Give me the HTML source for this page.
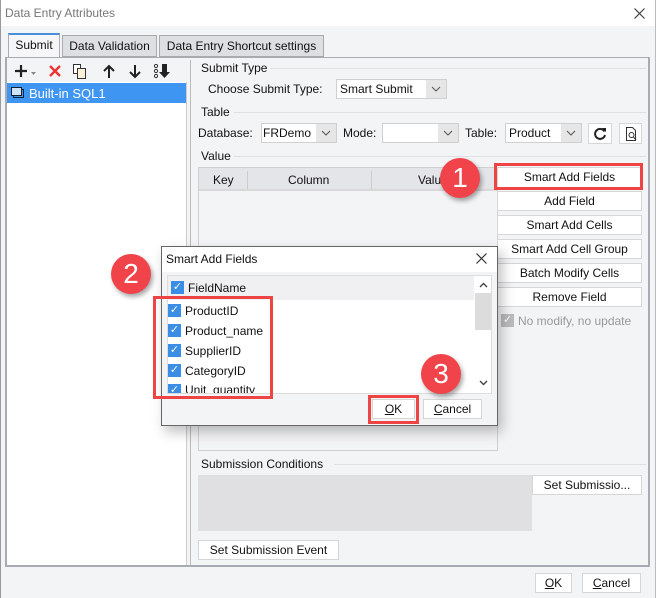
<!DOCTYPE html>
<html><head><style>
*{box-sizing:border-box;margin:0;padding:0}
body{width:656px;height:598px;background:#f3f4f6;font-family:"Liberation Sans",sans-serif;font-size:12px;color:#111;position:relative;overflow:hidden}
.a{position:absolute}
.btn{position:absolute;background:#fff;border:1px solid #d6d6d6;text-align:center;line-height:18px;font-size:12px}
.sel{position:absolute;background:#fff;border:1px solid #d0d0d0;height:20px;line-height:18px;padding-left:3px}
.sel .ar{position:absolute;right:0;top:0;width:20px;height:18px;background:#e6e6e6}
.sel .ar svg{position:absolute;left:5px;top:6px}
.lbl{position:absolute;font-size:12px}
.grp{position:absolute;height:1px;background:#e0e0e0}
.circ{position:absolute;width:40px;height:40px;border-radius:50%;background:#f0434a;color:#fff;font-size:28px;text-align:center;line-height:40px;box-shadow:2px 3px 5px rgba(0,0,0,.35)}
.red{position:absolute;border:3px solid #ee4444}
.cb{position:absolute;width:13px;height:13px;background:#3a8ee6;color:#fff;font-size:11px;line-height:13px;text-align:center}
.row{position:absolute;left:185px;font-size:12px}
</style></head><body>
<div class="a" style="left:0;top:0;width:656px;height:26px;background:#fff"></div>
<div class="lbl" style="left:5px;top:6px;color:#777">Data Entry Attributes</div>
<svg class="a" style="left:634px;top:8px" width="11" height="11"><path d="M0.5 0.5L10.5 10.5M10.5 0.5L0.5 10.5" stroke="#444" stroke-width="1.2"/></svg>
<div class="a" style="left:0;top:0;width:1px;height:598px;background:#999"></div>
<div class="a" style="left:655px;top:0;width:1px;height:598px;background:#bbb"></div>
<!-- tabs -->
<div class="a" style="left:8px;top:33px;width:52px;height:25px;background:#f6f6f8;border:1px solid #aab;border-top:2px solid #4a8fdc;border-bottom:none;text-align:center;line-height:20px">Submit</div>
<div class="a" style="left:62px;top:35px;width:95px;height:22px;background:#dedfe3;border:1px solid #aaa;text-align:center;line-height:20px">Data Validation</div>
<div class="a" style="left:159px;top:35px;width:165px;height:22px;background:#dedfe3;border:1px solid #aaa;text-align:center;line-height:20px">Data Entry Shortcut settings</div>
<div class="a" style="left:5px;top:57px;width:645px;height:510px;border:2px solid #a8abb3;border-top:1px solid #a8abb3"></div>
<!-- left -->
<div class="a" style="left:7px;top:82px;width:180px;height:483px;background:#fff;border-right:1px solid #ccc"></div>
<div class="a" style="left:7px;top:83px;width:179px;height:20px;background:#3e96f2"></div>
<div class="a" style="left:13px;top:89px;width:11px;height:9px;border:1px solid #123;background:#3e96f2"></div>
<div class="a" style="left:11px;top:87px;width:11px;height:9px;border:1px solid #123;background:#cfe3fa"></div>
<div class="lbl" style="left:29px;top:86px;color:#fff;font-size:13px">Built-in SQL1</div>
<svg class="a" style="left:14px;top:64px" width="200" height="16">
<path d="M1 7H13M7 1V13" stroke="#222" stroke-width="2.2"/>
<path d="M17 8h5l-2.5 3z" fill="#888"/>
<path d="M36 2L46 12M46 2L36 12" stroke="#e33" stroke-width="2.4"/>
<rect x="59.5" y="0.5" width="7" height="9" fill="#fff" stroke="#333"/>
<rect x="63.5" y="4.5" width="8" height="10" fill="#fdf2d8" stroke="#333"/>
<path d="M95 14V3M90 7l5-5 5 5" stroke="#222" stroke-width="2" fill="none"/>
<path d="M121 1V12M116 8l5 5 5-5" stroke="#222" stroke-width="2" fill="none"/>
<circle cx="142" cy="2" r="1.6" fill="none" stroke="#333"/><circle cx="142" cy="7" r="1.6" fill="none" stroke="#333"/><circle cx="142" cy="12" r="1.6" fill="none" stroke="#333"/>
<path d="M148 0h5v8h3l-5.5 6-5.5-6h3z" fill="#222"/>
</svg>
<div class="a" style="left:190px;top:60px;width:1px;height:505px;background:#bbb"></div>
<!-- right -->
<div class="lbl" style="left:201px;top:61px">Submit Type</div><div class="grp" style="left:270px;top:68px;width:376px"></div>
<div class="lbl" style="left:208px;top:82px">Choose Submit Type:</div>
<div class="sel" style="left:336px;top:79px;width:111px">Smart Submit<span class="ar"><svg width="10" height="6"><path d="M1 1l4 4 4-4" stroke="#555" fill="none"/></svg></span></div>
<div class="lbl" style="left:201px;top:105px">Table</div><div class="grp" style="left:234px;top:112px;width:412px"></div>
<div class="lbl" style="left:198px;top:126px">Database:</div>
<div class="sel" style="left:261px;top:123px;width:76px;padding-left:1px">FRDemo<span class="ar"><svg width="10" height="6"><path d="M1 1l4 4 4-4" stroke="#555" fill="none"/></svg></span></div>
<div class="lbl" style="left:343px;top:126px">Mode:</div>
<div class="sel" style="left:382px;top:123px;width:77px"><span class="ar"><svg width="10" height="6"><path d="M1 1l4 4 4-4" stroke="#555" fill="none"/></svg></span></div>
<div class="lbl" style="left:465px;top:126px">Table:</div>
<div class="sel" style="left:505px;top:123px;width:77px">Product<span class="ar"><svg width="10" height="6"><path d="M1 1l4 4 4-4" stroke="#555" fill="none"/></svg></span></div>
<div class="btn" style="left:588px;top:123px;width:24px;height:21px"><svg style="margin-top:3px" width="14" height="14"><path d="M11.5 4.5A5 5 0 1 0 12 8" stroke="#222" stroke-width="2" fill="none"/><path d="M9 1h4v4z" fill="#222"/></svg></div>
<div class="btn" style="left:619px;top:123px;width:23px;height:21px"><svg style="margin-top:3px" width="14" height="14"><path d="M2.5 .5h6l3 3v10h-9z" fill="#fff" stroke="#333"/><circle cx="7.5" cy="8" r="2.5" fill="none" stroke="#333"/><path d="M9.5 10l2.5 3" stroke="#333"/></svg></div>
<div class="lbl" style="left:201px;top:149px">Value</div><div class="grp" style="left:234px;top:156px;width:412px"></div>
<div class="a" style="left:198px;top:167px;width:300px;height:284px;border:1px solid #d0d0d0;background:#f3f4f6"></div>
<div class="a" style="left:199px;top:168px;width:298px;height:23px;background:#e4e5e9;border-bottom:2px solid #d8d8d8"></div>
<div class="lbl" style="left:213px;top:173px">Key</div><div class="a" style="left:247px;top:171px;width:1px;height:18px;background:#ccc"></div>
<div class="lbl" style="left:288px;top:173px">Column</div><div class="a" style="left:371px;top:171px;width:1px;height:18px;background:#ccc"></div>
<div class="lbl" style="left:418px;top:173px">Value</div>
<div class="btn" style="left:497px;top:167px;width:145px;height:21px">Smart Add Fields</div>
<div class="red" style="left:494px;top:163px;width:149px;height:27px"></div>
<div class="btn" style="left:497px;top:191px;width:145px;height:20px">Add Field</div>
<div class="btn" style="left:497px;top:215px;width:145px;height:20px">Smart Add Cells</div>
<div class="btn" style="left:497px;top:239px;width:145px;height:20px">Smart Add Cell Group</div>
<div class="btn" style="left:497px;top:263px;width:145px;height:20px">Batch Modify Cells</div>
<div class="btn" style="left:497px;top:287px;width:145px;height:20px">Remove Field</div>
<div class="cb" style="left:501px;top:314px;background:#bbb">✓</div>
<div class="lbl" style="left:518px;top:314px;color:#999">No modify, no update</div>
<div class="circ" style="left:440px;top:158px">1</div>
<div class="lbl" style="left:201px;top:457px">Submission Conditions</div><div class="grp" style="left:334px;top:464px;width:312px"></div>
<div class="a" style="left:198px;top:475px;width:334px;height:56px;background:#e0e0e2"></div>
<div class="btn" style="left:532px;top:475px;width:110px;height:20px">Set Submissio...</div>
<div class="btn" style="left:198px;top:540px;width:141px;height:20px">Set Submission Event</div>
<div class="btn" style="left:535px;top:573px;width:37px;height:20px"><u>O</u>K</div>
<div class="btn" style="left:582px;top:573px;width:59px;height:20px"><u>C</u>ancel</div>
<!-- dialog -->
<div class="a" style="left:161px;top:246px;width:337px;height:180px;background:#f3f4f6;border:1px solid #666;box-shadow:4px 6px 12px rgba(0,0,0,.25)"></div>
<div class="a" style="left:162px;top:247px;width:335px;height:25px;background:#fff"></div>
<div class="lbl" style="left:166px;top:252px">Smart Add Fields</div>
<svg class="a" style="left:476px;top:253px" width="11" height="11"><path d="M0.5 0.5L10.5 10.5M10.5 0.5L0.5 10.5" stroke="#333" stroke-width="1.2"/></svg>
<div class="a" style="left:167px;top:275px;width:325px;height:119px;background:#fff;border:1px solid #ddd"></div>
<div class="a" style="left:168px;top:276px;width:306px;height:24px;background:#f0f0f2"></div>
<div class="a" style="left:475px;top:293px;width:16px;height:37px;background:#dcdcdc"></div>
<svg class="a" style="left:479px;top:282px" width="9" height="6"><path d="M1 5l3.5-3.5L8 5" stroke="#444" fill="none" stroke-width="1.4"/></svg>
<svg class="a" style="left:479px;top:380px" width="9" height="6"><path d="M1 1l3.5 3.5L8 1" stroke="#444" fill="none" stroke-width="1.4"/></svg>
<div class="cb" style="left:171px;top:281px">✓</div><div class="lbl" style="left:188px;top:281px">FieldName</div>
<div class="cb" style="left:168px;top:304px">✓</div><div class="row" style="top:304px">ProductID</div>
<div class="cb" style="left:168px;top:324px">✓</div><div class="row" style="top:324px">Product_name</div>
<div class="cb" style="left:168px;top:344px">✓</div><div class="row" style="top:344px">SupplierID</div>
<div class="cb" style="left:168px;top:364px">✓</div><div class="row" style="top:364px">CategoryID</div>
<div class="a" style="left:168px;top:382px;width:200px;height:11px;overflow:hidden"><div class="cb" style="left:0;top:2px">✓</div><div class="lbl" style="left:17px;top:1px">Unit_quantity</div></div>
<div class="red" style="left:153px;top:296px;width:120px;height:103px"></div>
<div class="btn" style="left:372px;top:399px;width:43px;height:20px"><u>O</u>K</div>
<div class="red" style="left:368px;top:395px;width:51px;height:29px"></div>
<div class="btn" style="left:423px;top:399px;width:59px;height:20px"><u>C</u>ancel</div>
<div class="circ" style="left:111px;top:254px">2</div>
<div class="circ" style="left:421px;top:354px">3</div>
</body></html>
